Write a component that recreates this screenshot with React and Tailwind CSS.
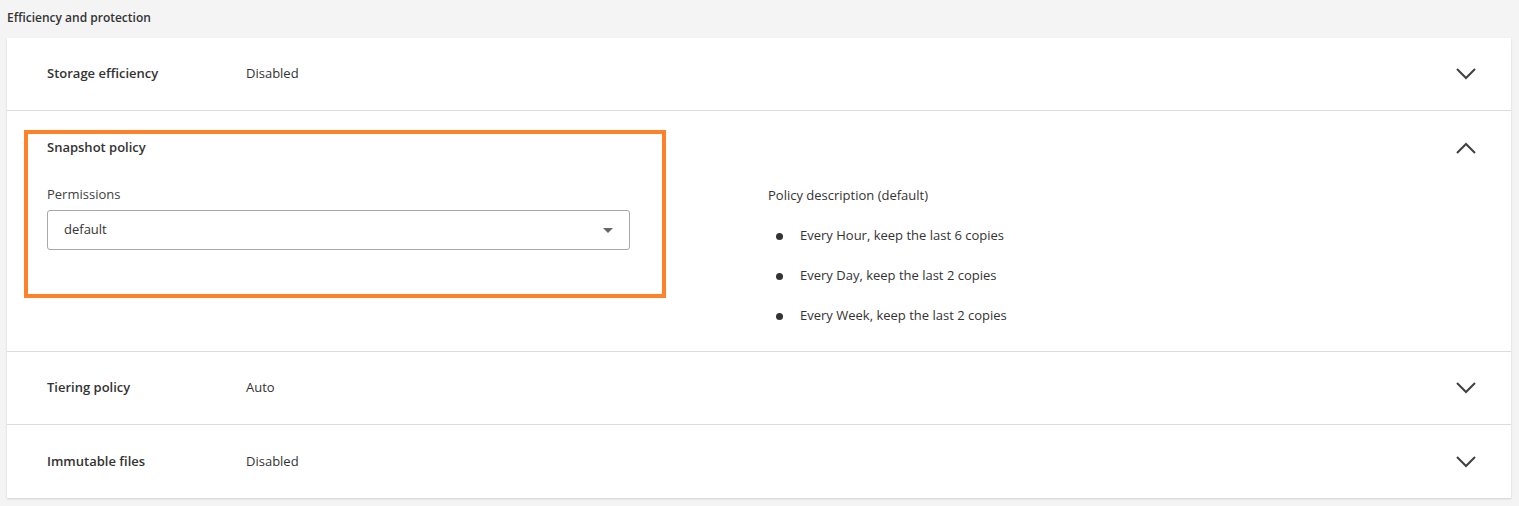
const Chev = ({ up }) => (
  <svg width="20" height="12" viewBox="0 0 20 12" fill="none" stroke="#404040" strokeWidth="2">
    {up ? <path d="M1 11 L10 2 L19 11" /> : <path d="M1 1 L10 10 L19 1" />}
  </svg>
);

const Row = ({ label, value }) => (
  <div className="h-[73px] flex items-center border-b border-[#dcdcdc] last:border-b-0">
    <div className="w-[239px] pl-[40px] text-[13px] font-semibold text-[#333]">{label}</div>
    <div className="flex-1 text-[13px] text-[#333]">{value}</div>
    <div className="w-[55px] flex justify-start"><Chev /></div>
  </div>
);

export default function App() {
  return (
    <div className="w-[1519px] h-[506px] bg-[#f4f4f4]" style={{ fontFamily: '"Open Sans", sans-serif' }}>
      <div className="h-[38px] pl-[7px] pt-[9px] text-[12px] font-semibold text-[#333]">Efficiency and protection</div>
      <div className="ml-[7px] w-[1504px] bg-white shadow-[0_1px_2px_rgba(0,0,0,0.15)]">
        <Row label="Storage efficiency" value="Disabled" />
        <div className="relative h-[241px] border-b border-[#dcdcdc] flex">
          <div className="absolute left-[17px] top-[19px] w-[642px] h-[168px] border-[4px] border-[#ff8228]" />
          <div className="w-[761px] pl-[40px] pt-[27px]">
            <div className="text-[13px] font-semibold text-[#333]">Snapshot policy</div>
            <div className="mt-[27px] text-[13px] text-[#404040]">Permissions</div>
            <div className="mt-[6px] w-[583px] h-[40px] border border-[#a8a8a8] rounded-[3px] flex items-center justify-between px-[16px]">
              <span className="text-[13px] text-[#333]">default</span>
              <svg width="10" height="5" viewBox="0 0 10 5"><path d="M0 0 L10 0 L5 5 Z" fill="#666" /></svg>
            </div>
          </div>
          <div className="flex-1 pt-[75px]">
            <div className="text-[13px] text-[#333]">Policy description (default)</div>
            <ul className="mt-[21px] flex flex-col gap-[21px]">
              {["Every Hour, keep the last 6 copies", "Every Day, keep the last 2 copies", "Every Week, keep the last 2 copies"].map(t => (
                <li key={t} className="flex items-center text-[13px] text-[#333] h-[19px]">
                  <span className="w-[7px] h-[7px] rounded-full bg-[#333] ml-[8px] mr-[17px]" />{t}
                </li>
              ))}
            </ul>
          </div>
          <div className="w-[55px] pt-[31px]"><Chev up /></div>
        </div>
        <Row label="Tiering policy" value="Auto" />
        <Row label="Immutable files" value="Disabled" />
      </div>
    </div>
  );
}
